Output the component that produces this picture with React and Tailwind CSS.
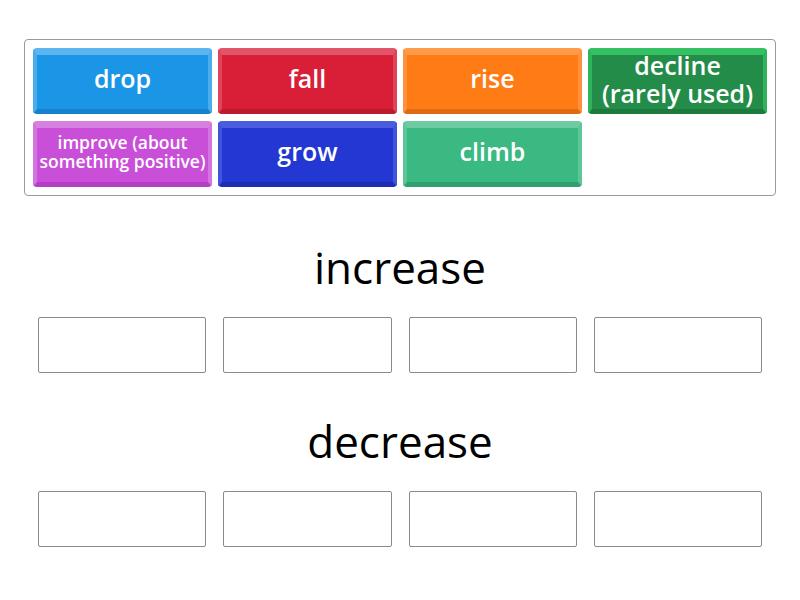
const tiles = [
  { label: "drop", cls: "bg-[#1b96e6] border-t-[#5cb5ef] border-x-[#4aaced] border-b-[#1681cb]", size: "text-[25px]" },
  { label: "fall", cls: "bg-[#d91f37] border-t-[#e2546a] border-x-[#df4459] border-b-[#bb1a2f]", size: "text-[25px]" },
  { label: "rise", cls: "bg-[#ff7b15] border-t-[#ff9a4b] border-x-[#ff913c] border-b-[#e06a10]", size: "text-[25px]" },
  { label: "decline (rarely used)", cls: "bg-[#238c48] border-t-[#33c163] border-x-[#2fb45b] border-b-[#1d7a3d]", size: "text-[25px] leading-[28px]" },
  { label: "improve (about something positive)", cls: "bg-[#c94fd8] border-t-[#d880e2] border-x-[#d474df] border-b-[#b43fc4]", size: "text-[17.5px] leading-[19px]" },
  { label: "grow", cls: "bg-[#2337d2] border-t-[#4b5ddf] border-x-[#4154dc] border-b-[#1d2eb4]", size: "text-[25px]" },
  { label: "climb", cls: "bg-[#3bb983] border-t-[#6ccba1] border-x-[#5ec597] border-b-[#31a070]", size: "text-[25px]" },
];

const Tile = ({ t }) => (
  <div
    className={`h-[66px] rounded-[4px] border-t-[7px] border-x-[4px] border-b-[5px] flex items-center justify-center text-center text-white font-semibold ${t.cls}`}
  >
    <span className={`${t.size} -mt-[6px]`}>{t.label}</span>
  </div>
);

const Group = ({ title, top }) => (
  <div className={top}>
    <div className="text-[44px] leading-[60px] text-center text-black">{title}</div>
    <div className="mt-[20px] mx-[38px] grid grid-cols-4 gap-[17px]">
      {[0, 1, 2, 3].map((i) => (
        <div key={i} className="h-[56px] border border-[#8a8a8a] rounded-[2px] bg-white"></div>
      ))}
    </div>
  </div>
);

export default function App() {
  return (
    <div
      className="w-[800px] h-[600px] bg-white overflow-hidden pt-[39px]"
      style={{ fontFamily: '"Open Sans", sans-serif' }}
    >
      <div className="mx-6 border border-[#9a9a9a] rounded-[4px] p-2 grid grid-cols-4 gap-[6px] h-[157px]">
        {tiles.map((t) => (
          <Tile key={t.label} t={t} />
        ))}
      </div>
      <Group title="increase" top="mt-[41px]" />
      <Group title="decrease" top="mt-[38px]" />
    </div>
  );
}
